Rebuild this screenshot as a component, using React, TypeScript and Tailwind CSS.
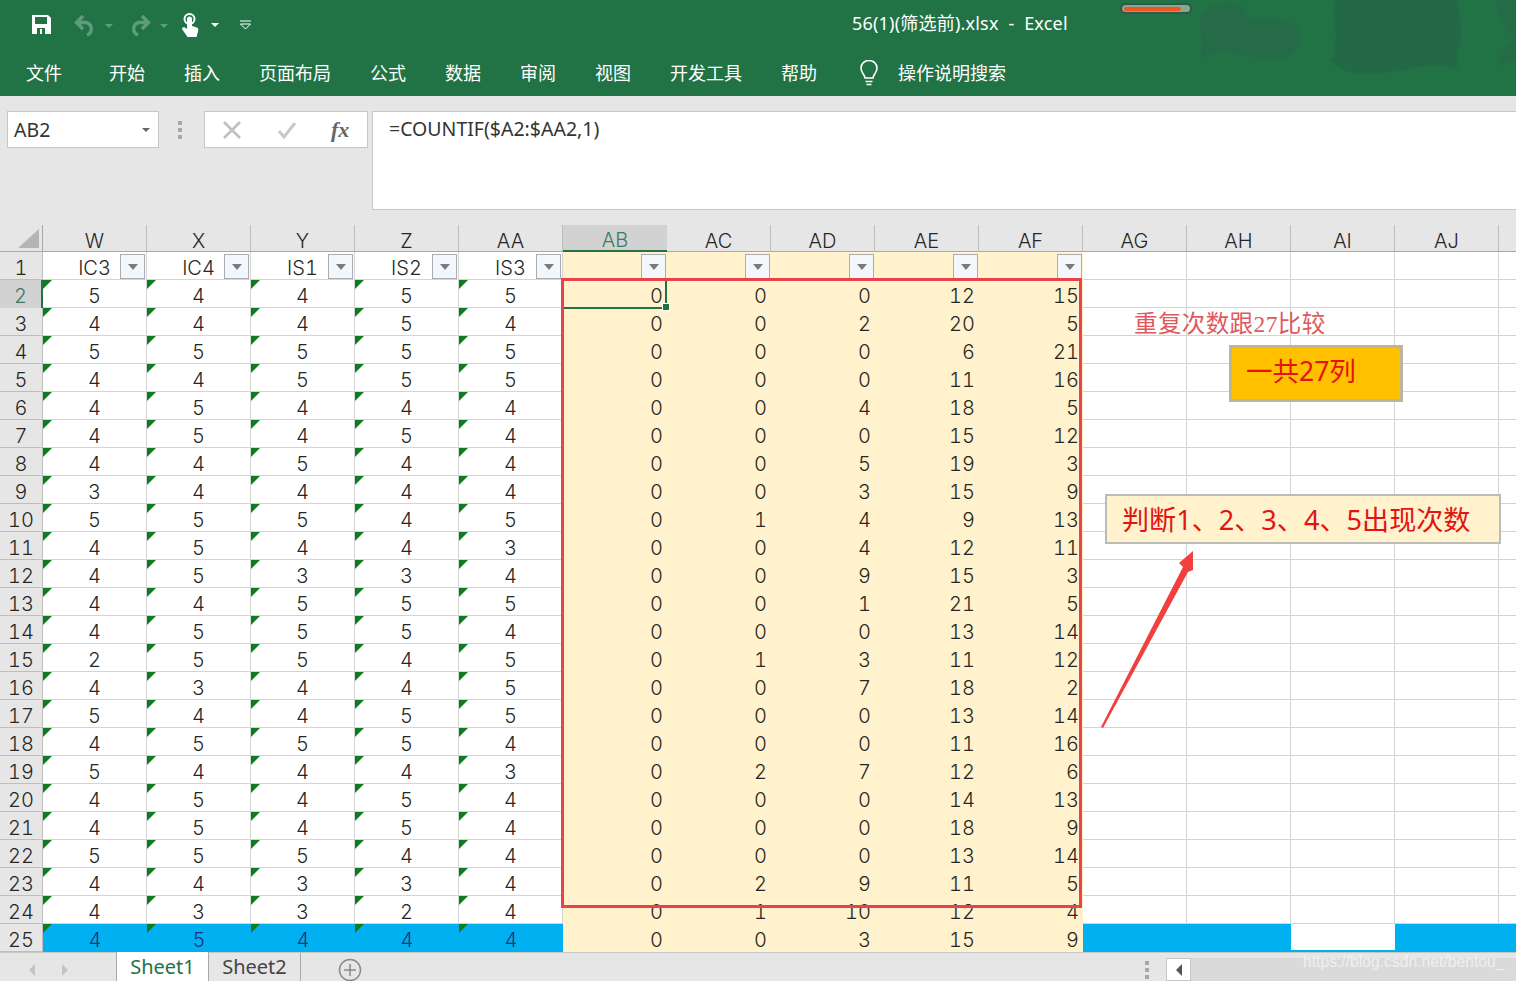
import React from "react";

const cols = ["W", "X", "Y", "Z", "AA", "AB", "AC", "AD", "AE", "AF", "AG", "AH", "AI", "AJ"];
const heads = ["IC3", "IC4", "IS1", "IS2", "IS3", "", "", "", "", ""];
const data: number[][] = [
  [5, 4, 4, 5, 5, 0, 0, 0, 12, 15],
  [4, 4, 4, 5, 4, 0, 0, 2, 20, 5],
  [5, 5, 5, 5, 5, 0, 0, 0, 6, 21],
  [4, 4, 5, 5, 5, 0, 0, 0, 11, 16],
  [4, 5, 4, 4, 4, 0, 0, 4, 18, 5],
  [4, 5, 4, 5, 4, 0, 0, 0, 15, 12],
  [4, 4, 5, 4, 4, 0, 0, 5, 19, 3],
  [3, 4, 4, 4, 4, 0, 0, 3, 15, 9],
  [5, 5, 5, 4, 5, 0, 1, 4, 9, 13],
  [4, 5, 4, 4, 3, 0, 0, 4, 12, 11],
  [4, 5, 3, 3, 4, 0, 0, 9, 15, 3],
  [4, 4, 5, 5, 5, 0, 0, 1, 21, 5],
  [4, 5, 5, 5, 4, 0, 0, 0, 13, 14],
  [2, 5, 5, 4, 5, 0, 1, 3, 11, 12],
  [4, 3, 4, 4, 5, 0, 0, 7, 18, 2],
  [5, 4, 4, 5, 5, 0, 0, 0, 13, 14],
  [4, 5, 5, 5, 4, 0, 0, 0, 11, 16],
  [5, 4, 4, 4, 3, 0, 2, 7, 12, 6],
  [4, 5, 4, 5, 4, 0, 0, 0, 14, 13],
  [4, 5, 4, 5, 4, 0, 0, 0, 18, 9],
  [5, 5, 5, 4, 4, 0, 0, 0, 13, 14],
  [4, 4, 3, 3, 4, 0, 2, 9, 11, 5],
  [4, 3, 3, 2, 4, 0, 1, 10, 12, 4],
  [4, 5, 4, 4, 4, 0, 0, 3, 15, 9],
];

function Tri() {
  return <span className="absolute left-0 top-0 w-0 h-0 border-t-[9px] border-r-[9px] border-t-[#0f7a1f] border-r-transparent" />;
}

function FilterBtn() {
  return (
    <span className="absolute right-[1px] top-[2px] w-[25px] h-[25px] bg-[#f3f6fa] border border-[#a9adb3] flex items-center justify-center">
      <span className="w-0 h-0 border-t-[6px] border-x-[5px] border-t-[#7a7a7a] border-x-transparent" />
    </span>
  );
}

function Cell({ value, col, row }: { value: number; col: number; row: number }) {
  const blue = row === 25;
  if (col < 5) {
    return (
      <div className={blue ? "relative h-[28px] pt-[4px] bg-[#00b0f0] text-[#17357f] flex items-center justify-center" : "relative h-[28px] pt-[5px] bg-white border-r border-b border-[#d4d4d4] flex items-center justify-center"}>
        <Tri />
        {value}
      </div>
    );
  }
  const selected = col === 5 && row === 2;
  return (
    <div className={selected ? "relative z-10 h-[28px] pt-[4px] bg-[#fff2cc] flex items-center justify-end pr-[4px]" : "relative h-[28px] pt-[4px] bg-[#fff2cc] flex items-center justify-end pr-[4px]"}>
      {value}
      {selected && (
        <>
          <span className="absolute left-0 right-0 bottom-[-1px] h-[2px] bg-[#217346]" />
          <span className="absolute right-0 top-0 bottom-0 w-[2px] bg-[#217346]" />
          <span className="absolute right-[-3px] bottom-[-3px] w-[6px] h-[6px] bg-[#217346] border border-white box-content" />
        </>
      )}
    </div>
  );
}

function QuickAccess() {
  return (
    <div className="h-[48px] flex items-center">
      <svg width="260" height="48" viewBox="0 0 260 48" className="shrink-0">
        <path d="M32 15h16l3 3v16H32z" fill="#fff" />
        <rect x="35" y="17" width="12" height="7" fill="#217346" />
        <rect x="37" y="28" width="8" height="6" fill="#217346" />
        <rect x="40" y="29" width="2" height="5" fill="#fff" />
        <path d="M83 16l-6.500 6.500L83 29M77 22.500h9a6.500 6.500 0 0 1 1 12.500" fill="none" stroke="#5f9c7c" strokeWidth="3.4" />
        <path d="M105 24h8l-4 4z" fill="#5f9c7c" />
        <path d="M142 16l6.500 6.500L142 29M148 22.500h-9a6.500 6.500 0 0 0-1 12.500" fill="none" stroke="#5f9c7c" strokeWidth="3.4" />
        <path d="M160 24h8l-4 4z" fill="#5f9c7c" />
        <path d="M187 24v-5a2.500 2.500 0 0 1 5 0v7l5 1.500c1.500.5 1.500 2.500 1 4l-1.500 5.500h-9l-5.500-8c0-2 2.500-2.500 5-0z" fill="#fff" />
        <circle cx="189.500" cy="19" r="5" fill="none" stroke="#fff" strokeWidth="2" />
        <path d="M211 23h8l-4 4z" fill="#fff" />
        <path d="M240 21h11M240.500 24h10l-5 5z" fill="none" stroke="#fff" strokeWidth="1" />
      </svg>
    </div>
  );
}

function Ribbon() {
  const tabs = ["开始", "插入", "页面布局", "公式", "数据", "审阅", "视图", "开发工具", "帮助"];
  return (
    <div className="relative h-[96px] bg-[#217346] text-white shrink-0 overflow-hidden">
      <svg width="330" height="80" viewBox="0 0 330 80" className="absolute right-0 top-0">
        <path d="M14 22C16 8 30 2 44 3C56 4 62 12 64 20C78 16 108 18 114 32C116 44 108 58 92 59C70 60 45 50 30 52C24 53 18 56 14 57C18 50 14 30 14 22Z" fill="#256b48" />
        <path d="M150 0H270C276 14 277 42 270 58C272 64 274 68 274 72C262 62 240 66 215 70C190 76 165 76 150 66C146 62 142 60 141 60C152 60 146 50 150 36C148 22 146 10 150 0Z" fill="#246947" />
        <path d="M310 0H330V60C322 62 316 64 310 66C314 54 322 46 328 38C320 30 312 18 310 0Z" fill="#256b48" />
      </svg>
      <div className="absolute left-[1120px] top-[3px] w-[72px] h-[11px] rounded-full bg-[#33574a] p-[2px]">
        <div className="h-full rounded-full bg-[#86a98f] flex items-center pl-[2px]">
          <div className="w-[57px] h-[4px] bg-[#f0551e] rounded-full" />
        </div>
      </div>
      <div className="absolute left-[852px] top-[10px] text-[18px] leading-[27px] whitespace-pre tracking-[0.2px]">56(1)(筛选前).xlsx  -  Excel</div>
      <QuickAccess />
      <div className="h-[48px] pt-[1px] flex items-center pl-[26px] text-[18px] leading-[48px]">
        <span className="mr-[47px]">文件</span>
        <div className="flex gap-[39px]">
          {tabs.map((t) => (
            <span key={t}>{t}</span>
          ))}
        </div>
        <svg width="24" height="26" viewBox="0 0 24 26" className="ml-[40px] mr-[17px]" fill="none" stroke="#fff" strokeWidth="1.6">
          <path d="M8 18c0-3-4-5-4-10a8 7.500 0 0 1 16 0c0 5-4 7-4 10z" />
          <path d="M8.500 21.500h7M9.500 24.500h5" />
        </svg>
        <span>操作说明搜索</span>
      </div>
    </div>
  );
}

function FormulaBar() {
  return (
    <div className="h-[129px] bg-[#e6e6e6] shrink-0 flex items-start pt-[15px] pl-[7px]">
      <div className="w-[152px] h-[37px] bg-white border border-[#c6c6c6] flex items-center justify-between pl-[6px] pr-[8px] text-[19.500px] text-[#333]">
        <span>AB2</span>
        <span className="w-0 h-0 border-t-[4px] border-x-[4px] border-t-[#666] border-x-transparent" />
      </div>
      <div className="w-[45px] h-[37px] pr-[3px] flex flex-col items-center justify-center gap-[3px]">
        <span className="w-[4px] h-[4px] bg-[#a8a8a8]" />
        <span className="w-[4px] h-[4px] bg-[#a8a8a8]" />
        <span className="w-[4px] h-[4px] bg-[#a8a8a8]" />
      </div>
      <div className="w-[164px] h-[37px] bg-white border border-[#c6c6c6] flex items-center pl-[18px] shrink-0">
        <svg width="18" height="18" viewBox="0 0 18 18" stroke="#c0c0c0" strokeWidth="2.6" fill="none">
          <path d="M1 1l16 16M17 1L1 17" />
        </svg>
        <svg width="20" height="18" viewBox="0 0 20 18" stroke="#c8c8c8" strokeWidth="3" fill="none" className="ml-[36px]">
          <path d="M2 10l5 6L18 2" />
        </svg>
        <span className="ml-[34px] text-[22px] leading-none italic font-bold text-[#666] font-['Liberation_Serif',serif]">fx</span>
      </div>
      <div className="ml-[4px] flex-1 h-[99px] bg-white border-l border-b border-t border-[#c6c6c6] pl-[16px] text-[19.500px] text-[#333] leading-[34px]">
        =COUNTIF($A2:$AA2,1)
      </div>
    </div>
  );
}

function Grid() {
  return (
    <div className="grid grid-cols-[43px_repeat(14,104px)_17px] text-[20px] font-light tabular-nums font-['Inter',sans-serif] text-[#262626] shrink-0 leading-none">
      <div className="h-[27px] bg-[#e6e6e6] border-b border-[#a8a8a8] border-r relative">
        <span className="absolute left-[18px] top-[4px] w-0 h-0 border-b-[19px] border-l-[21px] border-b-[#b5b5b5] border-l-transparent" />
      </div>
      {cols.map((c) => (
        <div
          key={c}
          className={
            c === "AB"
              ? "h-[27px] bg-[#d2d2d2] border-b-2 border-[#217346] text-[#3c7a5c] flex items-end justify-center pb-0"
              : "h-[27px] bg-[#e6e6e6] border-b border-r border-b-[#a8a8a8] border-r-[#bdbdbd] flex items-end justify-center pb-0"
          }
        >
          {c}
        </div>
      ))}
      <div className="h-[27px] bg-[#e6e6e6] border-b border-[#a8a8a8]" />

      <div className="h-[28px] pt-[5px] bg-[#e6e6e6] border-r border-b border-[#bdbdbd] flex items-center justify-center">1</div>
      {heads.map((h, i) => (
        <div key={i} className={i < 5 ? "relative h-[28px] pt-[5px] bg-white border-r border-b border-[#d4d4d4] flex items-center justify-center" : "relative h-[28px] bg-[#fff2cc] flex items-center justify-center"}>
          {h}
          <FilterBtn />
        </div>
      ))}
      {[0, 1, 2, 3, 4].map((i) => (
        <div key={i} className={i === 4 ? "h-[28px] bg-white border-b border-[#d4d4d4]" : "h-[28px] bg-white border-r border-b border-[#d4d4d4]"} />
      ))}

      {data.map((r, i) => {
        const row = i + 2;
        const blue = row === 25;
        return (
          <React.Fragment key={row}>
            <div className={row === 2 ? "h-[28px] pt-[4px] bg-[#d2d2d2] border-r-2 border-[#217346] text-[#3c7a5c] flex items-center justify-center" : "h-[28px] pt-[5px] bg-[#e6e6e6] border-r border-b border-[#bdbdbd] flex items-center justify-center"}>
              {row}
            </div>
            {r.map((v, c) => (
              <Cell key={c} value={v} col={c} row={row} />
            ))}
            {[0, 1, 2, 3, 4].map((k) => (
              <div
                key={k}
                className={
                  blue
                    ? k === 2
                      ? "h-[28px] bg-white border-b-2 border-[#00b0f0]"
                      : "h-[28px] bg-[#00b0f0]"
                    : k === 4
                    ? "h-[28px] bg-white border-b border-[#d4d4d4]"
                    : "h-[28px] bg-white border-r border-b border-[#d4d4d4]"
                }
              />
            ))}
          </React.Fragment>
        );
      })}
    </div>
  );
}

function SheetBar() {
  return (
    <div className="relative h-[29px] bg-[#e6e6e6] border-t border-[#c6c6c6] flex items-stretch shrink-0 text-[20px] leading-none">
      <div className="w-[116px] flex items-center pt-[5px] pl-[29px] gap-[27px] shrink-0">
        <span className="w-0 h-0 border-y-[6px] border-r-[6px] border-y-transparent border-r-[#c4c4c4]" />
        <span className="w-0 h-0 border-y-[6px] border-l-[6px] border-y-transparent border-l-[#c4c4c4]" />
      </div>
      <div className="w-[93px] bg-white border-x border-[#a8a8a8] text-[#217346] flex items-center justify-center -mt-px">Sheet1</div>
      <div className="w-[92px] border-r border-[#a8a8a8] text-[#444] flex items-center justify-center">Sheet2</div>
      <div className="ml-[37px] pt-[5px] flex items-center">
        <svg width="24" height="24" viewBox="0 0 24 24" fill="none" stroke="#8a8a8a" strokeWidth="1.500">
          <circle cx="12" cy="12" r="10.500" />
          <path d="M12 6v12M6 12h12" />
        </svg>
      </div>
      <div className="ml-auto flex items-stretch">
        <div className="w-[4px] pt-[5px] flex flex-col justify-center gap-[3px] mr-[17px]">
          <span className="w-[4px] h-[4px] bg-[#a8a8a8]" />
          <span className="w-[4px] h-[4px] bg-[#a8a8a8]" />
          <span className="w-[4px] h-[4px] bg-[#a8a8a8]" />
        </div>
        <div className="mt-[5px] w-[25px] bg-white border border-[#c6c6c6] flex items-center justify-center">
          <span className="w-0 h-0 border-y-[6px] border-r-[6px] border-y-transparent border-r-[#555]" />
        </div>
        <div className="mt-[5px] w-[325px] bg-[#dadada]" />
      </div>
      <div className="absolute left-[1303px] top-[-1px] text-[15.700px] leading-[20px] text-white/60 whitespace-nowrap font-['Liberation_Sans',sans-serif]">https://blog.csdn.net/bentou_</div>
    </div>
  );
}

function Annotations() {
  return (
    <>
      <div className="absolute z-20 left-[561px] top-[278px] w-[521px] h-[630px] border-[3px] border-[#e9424a]" />
      <div className="absolute left-[1134px] top-[309px] text-[23.500px] tracking-[0.4px] leading-[30px] text-[#e0585c] font-['Liberation_Serif','Noto_Sans_CJK_SC',serif] whitespace-nowrap">重复次数跟27比较</div>
      <div className="absolute left-[1229px] top-[345px] w-[174px] h-[57px] bg-[#ffc000] border-[3px] border-[#b9b5a0] pl-[14px] pt-[3px] text-[26.500px] leading-[40px] text-[#e21414] whitespace-nowrap">一共27列</div>
      <div className="absolute left-[1105px] top-[494px] w-[396px] h-[50px] bg-[#fff2cc] border-2 border-[#bcbcb6] pl-[15px] text-[27.100px] leading-[48px] text-[#e21414] whitespace-nowrap">判断1、2、3、4、5出现次数</div>
      <svg width="100" height="182" viewBox="0 0 100 182" className="absolute left-[1098px] top-[548px]">
        <path d="M3 179L85 19L81 15L95 3L95 22L90 24L5 180Z" fill="#f0403f" />
      </svg>
    </>
  );
}

export default function App() {
  return (
    <div className="relative w-[1516px] h-[981px] overflow-hidden flex flex-col bg-white font-['Noto_Sans','Noto_Sans_CJK_SC',sans-serif]">
      <Ribbon />
      <FormulaBar />
      <Grid />
      <SheetBar />
      <Annotations />
    </div>
  );
}
